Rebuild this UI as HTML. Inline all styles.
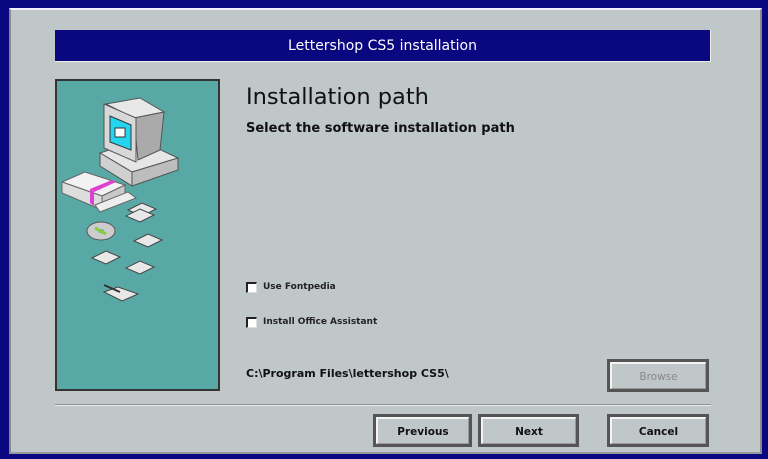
<!DOCTYPE html>
<html><head><meta charset="utf-8"><style>
*{margin:0;padding:0;box-sizing:border-box}
body{width:768px;height:459px;background:#0a0880;position:relative;overflow:hidden;font-family:"DejaVu Sans","Liberation Sans",sans-serif;color:#111}
#panel{position:absolute;left:9px;top:8px;width:753px;height:446px;background:#c0c7c8;border-top:2px solid #eef;border-left:2px solid #888;border-right:2px solid #888;border-bottom:2px solid #999}
.abs{position:absolute}
#title{left:55px;top:30px;width:656px;height:32px;background:#0a0880;border-right:1px solid #eee;border-bottom:1px solid #eee;color:#fff;font-size:14px;text-align:center;line-height:32px}
#img{left:55px;top:79px;width:165px;height:312px;background:#58a8a6;border:2px solid #333}
h1{position:absolute;left:246px;top:84px;font-size:22.5px;font-weight:normal}
h2{position:absolute;left:246px;top:121px;font-size:13px;font-weight:bold}
.cb{position:absolute;left:246px;width:11px;height:11px;background:#fff;border-top:2px solid #222;border-left:2px solid #222;border-right:1px solid #ddd;border-bottom:1px solid #ddd}
.lbl{position:absolute;left:263px;font-size:9px;font-weight:bold;color:#222}
.btn{position:absolute;height:33px;border:3px solid #555;background:#c0c7c8;font-size:10.5px;font-weight:bold;text-align:center;line-height:26px}
.btn span{display:block;height:100%;border-top:2px solid #f4f4f4;border-left:2px solid #f4f4f4;border-right:1px solid #999;border-bottom:1px solid #999}
#sep{left:55px;top:404px;width:656px;height:2px;background:#8a8f90;border-bottom:1px solid #eee}
</style></head><body>
<div id="panel"></div>
<div id="title" class="abs">Lettershop CS5 installation</div>
<div id="img" class="abs">
<svg width="161" height="308" viewBox="0 0 161 308">
<g transform="translate(-57,-81)">
<polygon points="100,153 140,140 178,158 132,172" fill="#e6e6e6" stroke="#555"/>
<polygon points="100,153 132,172 132,186 100,166" fill="#d0d0d0" stroke="#555"/>
<polygon points="132,172 178,158 178,170 132,186" fill="#bdbdbd" stroke="#555"/>
<polygon points="106,104 140,98 164,112 134,118" fill="#e8e8e8" stroke="#555"/>
<polygon points="134,118 164,112 160,150 138,160" fill="#aaa" stroke="#555"/>
<polygon points="104,104 136,118 136,162 104,148" fill="#d8d8d8" stroke="#555"/>
<polygon points="110,116 131,125 131,150 110,142" fill="#25d5ef" stroke="#333"/>
<rect x="115" y="128" width="10" height="9" fill="#fff" stroke="#333"/>
<polygon points="62,182 85,172 125,185 102,196" fill="#f2f2f2" stroke="#666"/>
<polygon points="62,182 102,196 102,210 62,193" fill="#ddd" stroke="#666"/>
<polygon points="102,196 125,185 125,196 102,210" fill="#c8c8c8" stroke="#666"/>
<polygon points="90,189 112,180 116,182 94,192" fill="#e040d0"/>
<polygon points="90,189 94,192 94,206 90,203" fill="#e040d0"/>
<polygon points="95,205 128,192 136,198 100,212" fill="#eee" stroke="#666"/>
<g fill="#e8e8e8" stroke="#444">
<polygon points="128,210 142,203 156,209 142,216"/>
<polygon points="126,216 140,209 154,215 140,222"/>
<polygon points="134,241 148,234 162,240 148,247"/>
<polygon points="92,258 106,251 120,257 106,264"/>
<polygon points="126,268 140,261 154,267 140,274"/>
<polygon points="104,292 118,287 138,294 122,301"/>
</g>
<ellipse cx="101" cy="231" rx="14" ry="9" fill="#ccc" stroke="#555"/>
<ellipse cx="101" cy="231" rx="3" ry="2" fill="#58a8a6"/>
<path d="M95,228 L106,234" stroke="#8c4" stroke-width="3"/>
<line x1="104" y1="285" x2="120" y2="292" stroke="#333" stroke-width="2"/>
</g></svg>
</div>
<h1>Installation path</h1>
<h2>Select the software installation path</h2>
<div class="cb" style="top:282px"></div><div class="lbl" style="top:282px">Use Fontpedia</div>
<div class="cb" style="top:317px"></div><div class="lbl" style="top:317px">Install Office Assistant</div>
<div class="abs" style="left:246px;top:367px;font-size:11px;font-weight:bold">C:\Program Files\lettershop CS5\</div>
<div class="btn" style="left:607px;top:359px;width:102px;color:#888;font-weight:normal"><span>Browse</span></div>
<div id="sep" class="abs"></div>
<div class="btn" style="left:373px;top:414px;width:99px"><span>Previous</span></div>
<div class="btn" style="left:478px;top:414px;width:101px"><span>Next</span></div>
<div class="btn" style="left:607px;top:414px;width:102px"><span>Cancel</span></div>
</body></html>
